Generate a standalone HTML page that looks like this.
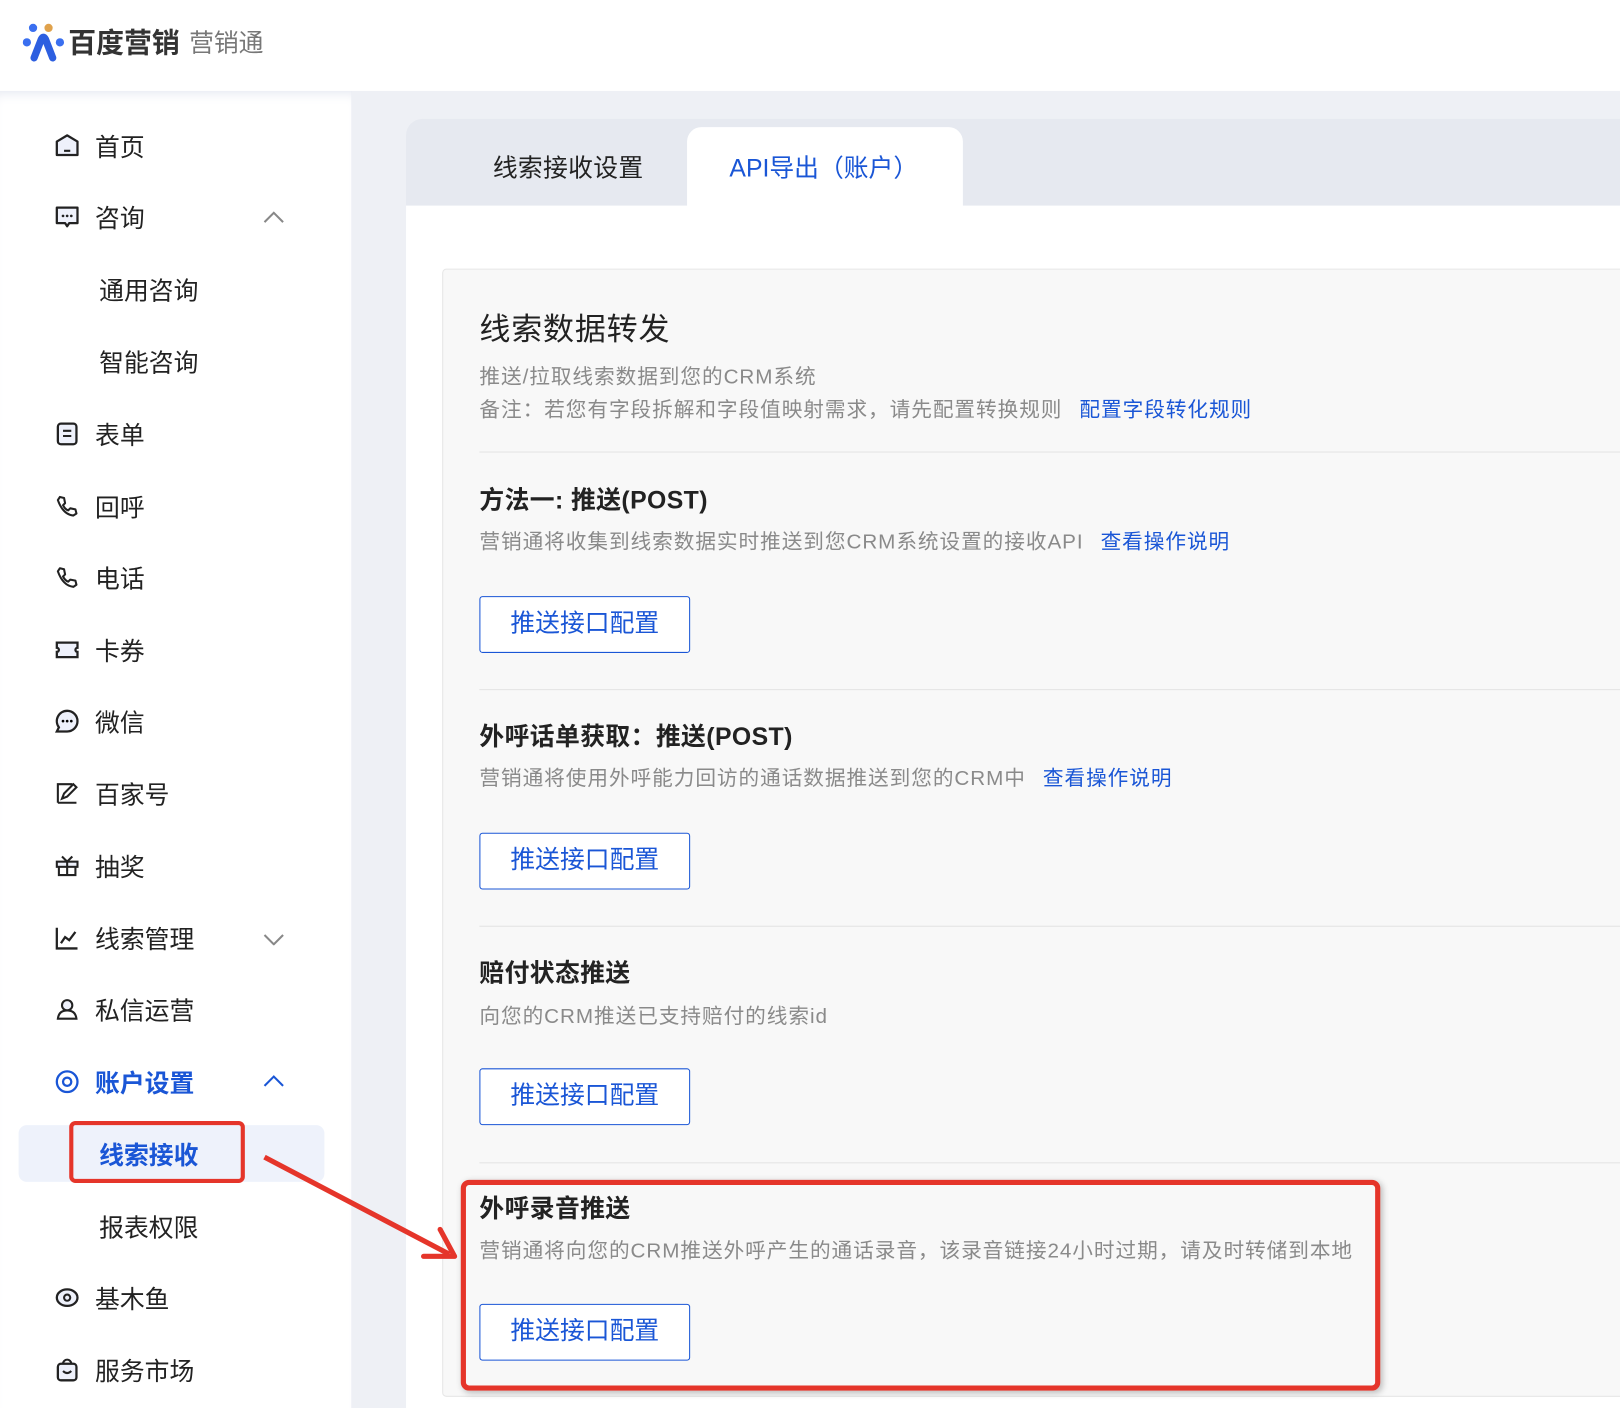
<!DOCTYPE html>
<html><head><meta charset="utf-8"><style>
*{margin:0;padding:0;box-sizing:border-box}
body{width:1620px;height:1408px;overflow:hidden;background:#eef0f5;font-family:"Liberation Sans","Noto Sans CJK SC",sans-serif}
#w{width:1568px;height:1363px;transform:scale(1.03316);transform-origin:0 0;position:relative;background:#eef0f5}
.a{position:absolute;white-space:nowrap}
.hd{left:0;top:0;width:1568px;height:88px;background:#fff}
.sb{left:0;top:88px;width:340px;height:1275px;background:#fff;box-shadow:inset 0 10px 12px -8px #e4e7f0}
.it{font-size:24px;color:#222;left:92px;transform:translateY(-52%)}
.ic{left:52px;width:26px;height:26px;transform:translateY(-50%)}
.sub{left:96px}
.chev{left:254px;width:22px;height:12px}
.gray{color:#8a8a8a;font-size:20px;letter-spacing:0.9px}
.h{font-size:24px;font-weight:bold;color:#222;letter-spacing:0.4px}
.lk{color:#1a56d6}
.btn{left:464px;width:204px;height:55px;border:1px solid #1a56d6;border-radius:3px;background:#fff;color:#1a56d6;font-size:24px;text-align:center;line-height:51px}
.dv{left:464px;width:1104px;height:1px;background:#e3e3e3}
</style></head><body><div id="w">
<div class="a hd"></div>
<svg class="a" style="left:22px;top:22px" width="40" height="38" viewBox="0 0 40 38"><circle cx="10" cy="5" r="4" fill="#3a6ff0"/><circle cx="25" cy="5" r="4" fill="#e0a24c"/><circle cx="4" cy="19" r="4" fill="#3a6ff0"/><circle cx="36" cy="19" r="4" fill="#3a6ff0"/><path d="M11 34 L18 16 Q20 12 22 16 L29 34" stroke="#2d5fe0" stroke-width="7" fill="none" stroke-linecap="round"/></svg>
<div class="a" style="left:66px;top:20px;font-size:27px;font-weight:bold;color:#333">百度营销</div>
<div class="a" style="left:183px;top:22px;font-size:24px;color:#777">营销通</div>
<div class="a sb"></div>
<svg class="a ic" style="top:141px" viewBox="0 0 26 26"><path d="M3 9 L13 3 L23 9 V22 H3 Z" fill="#eef1fb" stroke="#222" stroke-width="2.2" stroke-linejoin="round"/><path d="M10 18h6" stroke="#222" stroke-width="2"/></svg><div class="a it" style="top:141px">首页</div>
<svg class="a ic" style="top:210px" viewBox="0 0 26 26"><path d="M3 4h20v15h-8l-2 3-2-3H3z" fill="#eef1fb" stroke="#222" stroke-width="2.2" stroke-linejoin="round"/><circle cx="9" cy="12" r="1.3" fill="#222"/><circle cx="13" cy="12" r="1.3" fill="#222"/><circle cx="17" cy="12" r="1.3" fill="#222"/></svg><div class="a it" style="top:210px">咨询</div>
<svg class="a chev" style="top:204px" viewBox="0 0 22 12"><path d="M2 11 L11 2 L20 11" stroke="#888" stroke-width="2" fill="none"/></svg>
<div class="a it sub" style="top:280px">通用咨询</div>
<div class="a it sub" style="top:350px">智能咨询</div>
<svg class="a ic" style="top:420px" viewBox="0 0 26 26"><rect x="4" y="3" width="18" height="20" rx="3" fill="#eef1fb" stroke="#222" stroke-width="2.2"/><path d="M9 10h8M9 15h8" stroke="#222" stroke-width="2"/></svg><div class="a it" style="top:420px">表单</div>
<svg class="a ic" style="top:490px" viewBox="0 0 26 26"><path d="M6 4l4 1 1 5-2 2q2 4 5 5l2-2 5 1 1 4-3 2Q9 21 4 7z" fill="none" stroke="#222" stroke-width="2" stroke-linejoin="round"/></svg><div class="a it" style="top:490px">回呼</div>
<svg class="a ic" style="top:559px" viewBox="0 0 26 26"><path d="M6 4l4 1 1 5-2 2q2 4 5 5l2-2 5 1 1 4-3 2Q9 21 4 7z" fill="none" stroke="#222" stroke-width="2" stroke-linejoin="round"/></svg><div class="a it" style="top:559px">电话</div>
<svg class="a ic" style="top:629px" viewBox="0 0 26 26"><path d="M3 6h20v5a2 2 0 000 4v5H3v-5a2 2 0 000-4z" fill="#eef1fb" stroke="#222" stroke-width="2.2"/></svg><div class="a it" style="top:629px">卡券</div>
<svg class="a ic" style="top:698px" viewBox="0 0 26 26"><path d="M13 3a10 10 0 110 20H3l2-4A10 10 0 0113 3z" fill="#eef1fb" stroke="#222" stroke-width="2.2"/><circle cx="9" cy="13" r="1.3"/><circle cx="13" cy="13" r="1.3"/><circle cx="17" cy="13" r="1.3"/></svg><div class="a it" style="top:698px">微信</div>
<svg class="a ic" style="top:768px" viewBox="0 0 26 26"><path d="M4 22h18M4 22V4h14M8 18l2-5 9-9 3 3-9 9z" fill="none" stroke="#222" stroke-width="2"/></svg><div class="a it" style="top:768px">百家号</div>
<svg class="a ic" style="top:838px" viewBox="0 0 26 26"><rect x="3" y="9" width="20" height="5" fill="#eef1fb" stroke="#222" stroke-width="2"/><path d="M5 14v8h16v-8M13 9v13M13 9L8 4M13 9l5-5" fill="none" stroke="#222" stroke-width="2"/></svg><div class="a it" style="top:838px">抽奖</div>
<svg class="a ic" style="top:908px" viewBox="0 0 26 26"><path d="M3 3v20h20M7 18l4-6 4 3 6-8" fill="none" stroke="#222" stroke-width="2.2"/></svg><div class="a it" style="top:908px">线索管理</div>
<svg class="a chev" style="top:903px" viewBox="0 0 22 12"><path d="M2 2 L11 11 L20 2" stroke="#888" stroke-width="2" fill="none"/></svg>
<svg class="a ic" style="top:977px" viewBox="0 0 26 26"><circle cx="13" cy="9" r="5" fill="#eef1fb" stroke="#222" stroke-width="2"/><path d="M4 22q1-8 9-8t9 8z" fill="none" stroke="#222" stroke-width="2"/></svg><div class="a it" style="top:977px">私信运营</div>
<svg class="a ic" style="top:1047px" viewBox="0 0 26 26"><circle cx="13" cy="13" r="10" fill="none" stroke="#1a56d6" stroke-width="2.2"/><circle cx="13" cy="13" r="4" fill="none" stroke="#1a56d6" stroke-width="2.2"/></svg><div class="a it" style="top:1047px;color:#1a56d6;font-weight:bold">账户设置</div>
<svg class="a chev" style="top:1040px" viewBox="0 0 22 12"><path d="M2 11 L11 2 L20 11" stroke="#1a56d6" stroke-width="2" fill="none"/></svg>
<div class="a" style="left:18px;top:1089px;width:296px;height:55px;background:#eef2fb;border-radius:8px"></div>
<div class="a it sub" style="top:1117px;color:#1a56d6;font-weight:bold">线索接收</div>
<div class="a" style="left:67px;top:1085px;width:170px;height:60px;border:4px solid #e5352a;border-radius:6px"></div>
<div class="a it sub" style="top:1187px">报表权限</div>
<svg class="a ic" style="top:1256px" viewBox="0 0 26 26"><ellipse cx="13" cy="13" rx="10" ry="8" fill="#eef1fb" stroke="#222" stroke-width="2.2"/><circle cx="13" cy="13" r="3" fill="none" stroke="#222" stroke-width="2"/></svg><div class="a it" style="top:1256px">基木鱼</div>
<svg class="a ic" style="top:1326px" viewBox="0 0 26 26"><rect x="4" y="7" width="18" height="16" rx="3" fill="#eef1fb" stroke="#222" stroke-width="2.2"/><path d="M9 7a4 4 0 018 0M9 14q4 4 8 0" fill="none" stroke="#222" stroke-width="2"/></svg><div class="a it" style="top:1326px">服务市场</div>
<div class="a" style="left:393px;top:115px;width:1175px;height:90px;background:#e6e9f0;border-radius:16px 0 0 0"></div>
<div class="a" style="left:477px;top:143px;font-size:24px;color:#222;letter-spacing:0.3px">线索接收设置</div>
<div class="a" style="left:665px;top:123px;width:267px;height:82px;background:#fff;border-radius:14px 14px 0 0"></div>
<div class="a" style="left:706px;top:143px;font-size:24px;color:#1a56d6">API导出（账户）</div>
<div class="a" style="left:393px;top:199px;width:1175px;height:1164px;background:#fff"></div>
<div class="a" style="left:428px;top:260px;width:1150px;height:1092px;background:#f8f8f8;border:1px solid #e6e6e6;border-radius:4px"></div>
<div class="a" style="left:464px;top:294px;font-size:30px;color:#222;letter-spacing:0.8px">线索数据转发</div>
<div class="a gray" style="left:464px;top:348px">推送/拉取线索数据到您的CRM系统</div>
<div class="a gray" style="left:464px;top:380px">备注：若您有字段拆解和字段值映射需求，请先配置转换规则 <span class="lk" style="margin-left:10px">配置字段转化规则</span></div>
<div class="a dv" style="top:437px"></div>
<div class="a h" style="top:464px;left:464px">方法一: 推送(POST)</div>
<div class="a gray" style="left:464px;top:508px">营销通将收集到线索数据实时推送到您CRM系统设置的接收API <span class="lk" style="margin-left:10px">查看操作说明</span></div>
<div class="a btn" style="top:577px">推送接口配置</div>
<div class="a dv" style="top:667px"></div>
<div class="a h" style="top:693px;left:464px">外呼话单获取：推送(POST)</div>
<div class="a gray" style="left:464px;top:737px">营销通将使用外呼能力回访的通话数据推送到您的CRM中 <span class="lk" style="margin-left:10px">查看操作说明</span></div>
<div class="a btn" style="top:806px">推送接口配置</div>
<div class="a dv" style="top:896px"></div>
<div class="a h" style="top:922px;left:464px">赔付状态推送</div>
<div class="a gray" style="left:464px;top:967px">向您的CRM推送已支持赔付的线索id</div>
<div class="a btn" style="top:1034px">推送接口配置</div>
<div class="a dv" style="top:1125px"></div>
<div class="a h" style="top:1150px;left:464px">外呼录音推送</div>
<div class="a gray" style="left:464px;top:1194px">营销通将向您的CRM推送外呼产生的通话录音，该录音链接24小时过期，请及时转储到本地</div>
<div class="a btn" style="top:1262px">推送接口配置</div>
<div class="a" style="left:446px;top:1142px;width:890px;height:204px;border:5px solid #e5352a;border-radius:8px;box-shadow:2px 2px 6px rgba(0,0,0,.25)"></div>
<svg class="a" style="left:250px;top:1110px" width="200" height="115" viewBox="0 0 200 115"><path d="M6 10 L185 104" stroke="#e5352a" stroke-width="5"/><path d="M190 106 L160 106 M190 106 L176 80" stroke="#e5352a" stroke-width="5" stroke-linecap="round"/></svg>
</div></body></html>
